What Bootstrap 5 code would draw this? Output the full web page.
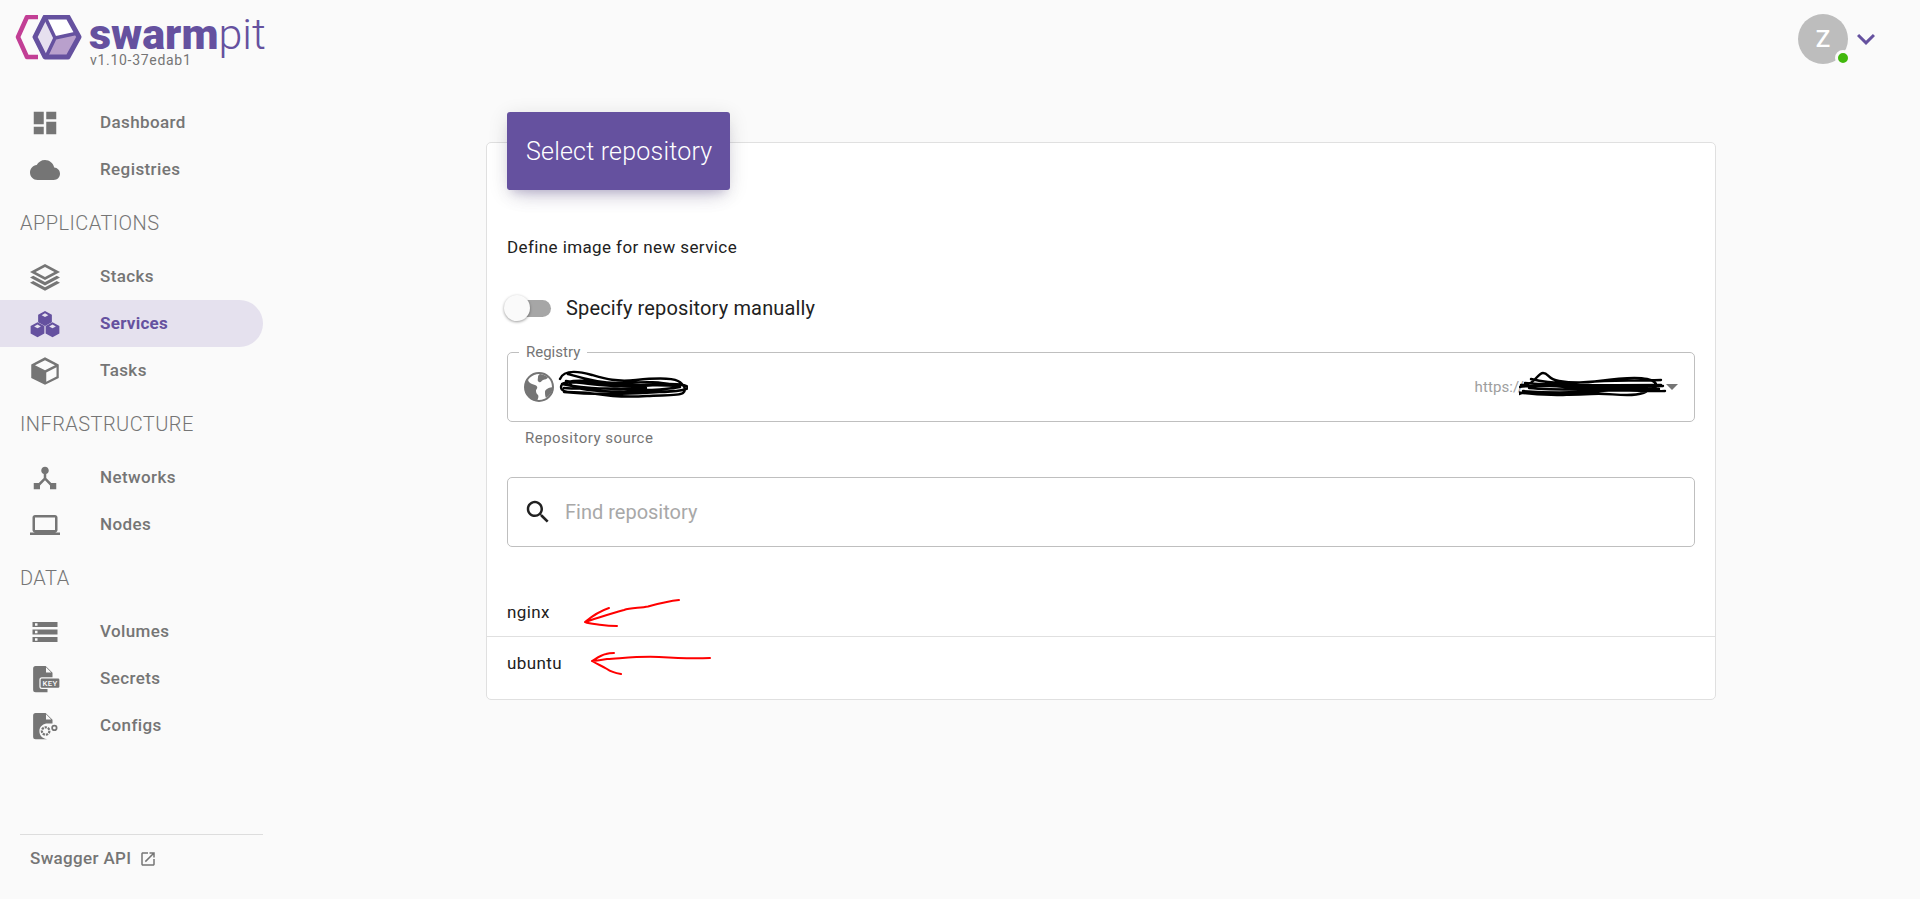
<!DOCTYPE html>
<html lang="en">
<head>
<meta charset="utf-8">
<title>Swarmpit</title>
<link href="https://cdn.jsdelivr.net/npm/bootstrap@5.3.0/dist/css/bootstrap.min.css" rel="stylesheet">
<style>
html,body{height:100%;overflow:hidden}
body{background:#fafafa;font-family:Roboto,"Liberation Sans",sans-serif;color:#212121}
.side{width:263px;height:899px}
.brand{height:98.500px;padding:15px 0 0 15px;gap:7px}
.brand-name{font-size:43px;line-height:37px;color:#65519f;margin-top:1px;font-weight:900;letter-spacing:0}
.brand-name span{font-weight:300;letter-spacing:0}
.brand-ver{font-size:14px;line-height:14px;color:#757575;margin-top:0;letter-spacing:.7px;padding-left:1px}
.side-link{height:47px;padding:2px 0 0 30px;color:#757575;font-size:17px;font-weight:500;letter-spacing:.4px;border-radius:0 24px 24px 0;text-decoration:none}
.side-link svg{width:30px;height:30px;fill:#757575;flex:none;margin-right:40px}
.side-link.on{background:#e5e1ee;color:#65519f;font-weight:700;letter-spacing:.25px}
.side-link.on svg{fill:#65519f}
.side-head{height:60px;padding-left:20px;font-size:20px;font-weight:300;color:#757575;letter-spacing:.45px}
.side-foot{margin:auto 0 0 20px;border-top:1px solid #ddd;height:65px;padding:0 0 17px 10px;color:#757575;font-size:17px;font-weight:500;letter-spacing:.35px}
.side-foot svg{width:18px;height:18px;fill:#757575;margin-left:8px}
.main-area{padding:0 204px 0 223px}
.topbar{height:112px;padding:14px 0 0 0;margin-right:-204px;padding-right:36px}
.avatar{width:50px;height:50px;background:#bdbdbd;color:#fff;font-size:24px;font-weight:500}
.avatar-dot{width:16px;height:16px;border:3px solid #fafafa;background:#41b80c;right:-3px;bottom:-2px}
.chev{width:36px;height:36px;fill:#65519f}
.panel{margin-top:30px;height:558px;border-color:#e0e0e0;border-radius:5px;background:#fff}
.panel-title{width:223px;height:78px;margin:-31px 0 0 20px;padding:2px 0 0 19px;background:#65519f;color:#fff;font-size:25px;font-weight:300;letter-spacing:.2px;border-radius:3px;box-shadow:0 12px 20px -10px rgba(101,81,159,.28),0 4px 20px 0 rgba(0,0,0,.12),0 7px 8px -5px rgba(101,81,159,.2)}
.panel-body-x{padding:45px 20px 0}
.lead-x{font-size:17px;line-height:24px;letter-spacing:.4px}
.switch-row{margin-top:33px;height:32px;font-size:20px;letter-spacing:.15px}
.switch-track{width:34px;height:17px;border-radius:9px;background:#a6a6a6;margin:0 15px 0 10px}
.switch-thumb{width:26px;height:26px;left:-13px;top:-5px;background:#fafafa;box-shadow:0 1px 3px rgba(0,0,0,.4)}
.field-box{height:70px;border:1px solid #bfbfbf;border-radius:5px}
.registry{margin-top:28px;padding:0 16px 0 16px}
.registry-label{left:11px;top:-9px;padding:0 7px;background:#fff;font-size:15px;line-height:16px;color:#757575}
.globe{width:30px;height:30px;flex:none;margin-right:2px}
.hide-a{width:132px;height:32px;margin-bottom:6px}
.https{font-size:15px;color:#9e9e9e;letter-spacing:.1px}
.hide-b{width:152px;height:26px;margin:0 0 6px -5px}
.caret-x{border-left:6px solid transparent;border-right:6px solid transparent;border-top:6px solid #757575;margin-left:-5px}
.helper{padding:7px 0 0 18px;font-size:15px;line-height:18px;color:#757575;letter-spacing:.48px}
.search-box{margin-top:30px;padding-left:15px}
.search-box svg{width:30px;height:30px;fill:#212121;flex:none;margin-right:12px}
.search-input{border:0;background:transparent;padding:0;font-size:20px;box-shadow:none}
.search-input::placeholder{color:#a8a8a8}
.panel .repos{margin-top:42px;border-top:0;border-bottom:0}
.repo{padding:0 20px;height:48px;background:transparent;font-size:17px;letter-spacing:.4px;color:#212121;border-color:#e0e0e0}
.repo-next{height:51px;border-bottom:0;padding-top:2px;padding-bottom:0}
.arrow-a{width:100px;height:32px;margin-left:32px}
.arrow-b{width:124px;height:26px;margin-left:27px}
.ink-red{fill:none;stroke:#f00;stroke-width:2;stroke-linecap:round;stroke-linejoin:round}
.ink-black{fill:none;stroke:#000;stroke-width:2.400;stroke-linecap:round;stroke-linejoin:round}
</style>
</head>
<body>
<div class="d-flex">
  <aside class="side d-flex flex-column flex-shrink-0">
    <div class="brand d-flex">
      <svg class="flex-shrink-0" width="67" height="46" viewBox="15 15 67 46" aria-hidden="true">
        <path d="M38 17H27L18 37L27 57H38" fill="none" stroke="#c23f95" stroke-width="4.500" stroke-linejoin="round"/>
        <path d="M45 17H68L79 37L68 57H45L35 37Z" fill="#fff"/>
        <path d="M45 17L55 38L46 57L35 37Z" fill="#e6e0ef"/>
        <path d="M55 38L79 33L68 57H46Z" fill="#b9a0cc"/>
        <path d="M45 17L55 38L78 33M55 38L46 57" fill="none" stroke="#65519f" stroke-width="3.500"/>
        <path d="M45 17H68L79 37L68 57H45L35 37Z" fill="none" stroke="#65519f" stroke-width="5" stroke-linejoin="round"/>
      </svg>
      <div class="flex-shrink-0">
        <div class="brand-name">swarm<span>pit</span></div>
        <div class="brand-ver">v1.10-37edab1</div>
      </div>
    </div>
    <nav class="nav flex-column">
      <a class="side-link d-flex align-items-center" href="#"><svg viewBox="0 0 24 24"><path d="M3 13h8V3H3v10zm0 8h8v-6H3v6zm10 0h8V11h-8v10zm0-18v6h8V3h-8z"/></svg>Dashboard</a>
      <a class="side-link d-flex align-items-center" href="#"><svg viewBox="0 0 24 24"><path d="M19.350 10.040C18.670 6.590 15.640 4 12 4 9.110 4 6.600 5.640 5.350 8.040 2.340 8.360 0 10.910 0 14c0 3.310 2.690 6 6 6h13c2.760 0 5-2.240 5-5 0-2.640-2.050-4.780-4.650-4.960z"/></svg>Registries</a>
      <div class="side-head d-flex align-items-center">APPLICATIONS</div>
      <a class="side-link d-flex align-items-center" href="#"><svg viewBox="0 0 24 24"><path d="M12 1.600L0 8l12 6.400L24 8zM12 4l7.500 4-7.500 4-7.500-4z" fill-rule="evenodd"/><path d="M2.600 10.900L0 12.300l12 6.400 12-6.400-2.600-1.400-9.400 5z"/><path d="M2.600 15.200L0 16.600 12 23l12-6.400-2.600-1.400-9.400 5z"/></svg>Stacks</a>
      <a class="side-link on d-flex align-items-center" href="#"><svg viewBox="0 0 24 24"><path d="M12 1.500l5.500 3v6L12 13.500 6.500 10.500v-6zM12 3.400L9.300 4.900 12 6.400l2.700-1.500z" fill-rule="evenodd"/><path d="M6 10.500l5.500 3v6L6 22.500 .5 19.500v-6zM6 12.400L3.300 13.900 6 15.400l2.700-1.500z" fill-rule="evenodd"/><path d="M18 10.500l5.500 3v6L18 22.500l-5.500-3v-6zM18 12.400l-2.700 1.500 2.700 1.500 2.700-1.500z" fill-rule="evenodd"/></svg>Services</a>
      <a class="side-link d-flex align-items-center" href="#"><svg viewBox="0 0 24 24"><path d="M12 1L1 6.700v10.800L12 23l11-5.500V6.700zM12 3.300l8 4-8 4.100-8-4.100zM13 13.100l8.200-4.200v7.400L13 20.500z" fill-rule="evenodd"/></svg>Tasks</a>
      <div class="side-head d-flex align-items-center">INFRASTRUCTURE</div>
      <a class="side-link d-flex align-items-center" href="#"><svg viewBox="0 0 24 24"><path d="M17 16l-4-4V8.820C14.160 8.400 15 7.300 15 6c0-1.660-1.340-3-3-3S9 4.340 9 6c0 1.300.84 2.400 2 2.820V12l-4 4H3v5h5v-3.050l4-4.200 4 4.200V21h5v-5h-4z"/></svg>Networks</a>
      <a class="side-link d-flex align-items-center" href="#"><svg viewBox="0 0 24 24"><path d="M20 18c1.100 0 2-.9 2-2V6c0-1.100-.9-2-2-2H4c-1.100 0-2 .9-2 2v10c0 1.100.9 2 2 2H0v2h24v-2h-4zM4 6h16v10H4V6z"/></svg>Nodes</a>
      <div class="side-head d-flex align-items-center">DATA</div>
      <a class="side-link d-flex align-items-center" href="#"><svg viewBox="0 0 24 24"><path d="M2 20h20v-4H2v4zm2-3h2v2H4v-2zM2 4v4h20V4H2zm4 3H4V5h2v2zm-4 7h20v-4H2v4zm2-3h2v2H4v-2z"/></svg>Volumes</a>
      <a class="side-link d-flex align-items-center" href="#"><svg viewBox="0 0 24 24"><path d="M4.500 1.500h8l5.500 5.500v3.500H9.500a2 2 0 0 0-2 2V18a2 2 0 0 0 2 2H14v2.500H4.500a2 2 0 0 1-2-2v-17a2 2 0 0 1 2-2z"/><path d="M12.800 2.500v4.200h4.200z" fill="#fafafa"/><rect x="8.500" y="11.500" width="15" height="7.500" rx="1" fill="#757575"/><text x="16" y="17.700" text-anchor="middle" font-size="6.200" font-family="Roboto,sans-serif" fill="#fafafa" letter-spacing=".2">KEY</text></svg>Secrets</a>
      <a class="side-link d-flex align-items-center" href="#"><svg viewBox="0 0 24 24"><path d="M4.500 1.500h8l5.500 5.500v3H14c-3 0-6.500 2-6.500 6s3 6.500 6.500 6.500H4.500a2 2 0 0 1-2-2v-17a2 2 0 0 1 2-2z"/><path d="M12.800 2.500v4.200h4.200z" fill="#fafafa"/><circle cx="12.500" cy="16" r="4.200" fill="#fafafa"/><circle cx="12.500" cy="16" r="3" fill="none" stroke="#757575" stroke-width="1.800" stroke-dasharray="1.800 .8"/><circle cx="19.500" cy="13.500" r="1.800" fill="none" stroke="#757575" stroke-width="1.400"/></svg>Configs</a>
    </nav>
    <div class="side-foot d-flex align-items-center">Swagger API<svg viewBox="0 0 24 24"><path d="M19 19H5V5h7V3H5c-1.110 0-2 .9-2 2v14c0 1.100.89 2 2 2h14c1.100 0 2-.9 2-2v-7h-2v7zM14 3v2h3.590l-9.830 9.830 1.410 1.410L19 6.410V10h2V3h-7z"/></svg></div>
  </aside>
  <main class="main-area flex-grow-1">
    <div class="topbar d-flex justify-content-end">
      <div class="d-flex align-items-center align-self-start">
        <div class="avatar position-relative rounded-circle d-flex align-items-center justify-content-center">Z<span class="avatar-dot position-absolute rounded-circle"></span></div>
        <svg class="chev" viewBox="0 0 24 24"><path d="M16.590 8.590L12 13.170 7.410 8.590 6 10l6 6 6-6z"/></svg>
      </div>
    </div>
    <div class="card panel">
      <div class="panel-title d-flex align-items-center">Select repository</div>
      <div class="panel-body-x">
        <div class="lead-x">Define image for new service</div>
        <div class="switch-row d-flex align-items-center">
          <span class="switch-track position-relative d-block"><span class="switch-thumb position-absolute rounded-circle d-block"></span></span>
          Specify repository manually
        </div>
        <div class="field-box registry position-relative d-flex align-items-center">
          <span class="registry-label position-absolute">Registry</span>
          <svg class="globe" viewBox="0 0 30 30"><circle cx="15" cy="15" r="14" fill="#fff" stroke="#757575" stroke-width="2"/><path d="M15 1C11 2 7 3.500 4 7c0 3 2 4 4 5s4 .5 5 2.500-1 2.500-1 4.500 1 3 2 4 0 4-1 6C6 28 1 22 1 15 1 9 6 3 15 1zM16 2c3 .5 6 1.500 8 3.500-1 2-3 1.500-5 2.500s-2 3-4 2-1-3-1-5 1-2 2-3zM23 17c2-1 4-2 6-1.500-.5 4-3 8-7 10.500-1-2-1-4-1-6s1-2 2-3z" fill="#757575"/></svg>
          <svg class="hide-a" viewBox="0 0 132 32"><path class="ink-black" d="M4 11C8 1 22 3 36 7S60 14 80 12s36-2 42 1 9 9 5 12-20 2-36 3-32 1-50-2-29-1-33-3-4-6 0-8 16 0 36 2 36 2 56 0 30 0 32 2-10 5-30 5-38 0-58-1-27-4-30-7 5-4 20-3 36 5 56 4 28-2 36 0M8 20c20 2 44-1 60 1s40 1 56-2M12 6c14 4 30 9 48 9s40-3 56 2M6 16c24 5 58 6 84 4M10 13c26 5 60 3 112 5M8 24c30 3 70 2 110-1"/></svg>
          <span class="ms-auto https">https://</span>
          <svg class="hide-b" viewBox="0 0 152 26"><path class="ink-black" d="M2 14c14 1 16-12 22-12s4 6 16 8 26 2 40 0 36-5 48-2 12 9 2 11-30-1-48 1-30 4-44 4-22-1-34-2-14-4-4-6 30-1 46 0 34 2 50 0 28 0 32 2-6 6-20 6-20-2-36-1-36 1-52-1-14-1-20 1M12 8c16 4 34 5 56 3s44-1 74-2M4 20c24 2 48 2 76 0s46 1 66 0M6 12c30 3 60 2 136 2M10 17c30 3 70 1 130 1M14 15c30-1 60 3 130 0"/></svg>
          <span class="caret-x d-block"></span>
        </div>
        <div class="helper">Repository source</div>
        <div class="field-box search-box d-flex align-items-center">
          <svg viewBox="0 0 24 24"><path d="M15.500 14h-.79l-.28-.27C15.410 12.590 16 11.110 16 9.500 16 5.910 13.090 3 9.500 3S3 5.910 3 9.500 5.910 16 9.500 16c1.610 0 3.090-.59 4.230-1.570l.27.28v.79l5 4.990L20.490 19l-4.990-5zm-6 0C7.010 14 5 11.990 5 9.500S7.010 5 9.500 5 14 7.010 14 9.500 11.990 14 9.500 14z"/></svg>
          <input class="form-control search-input" type="text" placeholder="Find repository" aria-label="Find repository">
        </div>
      </div>
      <ul class="list-group list-group-flush repos">
        <li class="list-group-item repo d-flex align-items-center">nginx
          <svg class="arrow-a" viewBox="0 0 100 32"><path class="ink-red" d="M97 3C86 4 75 7 66 9.500 58 11 48 11 42 13 30 16 16 21 3 25 8 27 14 27 20 28 26 29 30 29 35 29M3 25C9 20 18 14 27 11"/></svg>
        </li>
        <li class="list-group-item repo repo-next d-flex align-items-center">ubuntu
          <svg class="arrow-b" viewBox="0 0 124 26"><path class="ink-red" d="M121 7C100 8 85 7 70 6 52 5 35 7 18 8 14 9 10 9 3 10 8 13 13 15 18 18 22 21 26 22 32 23M3 10C8 7 12 4 17 3 20 2 22 2 25 2"/></svg>
        </li>
      </ul>
    </div>
  </main>
</div>
</body>
</html>
